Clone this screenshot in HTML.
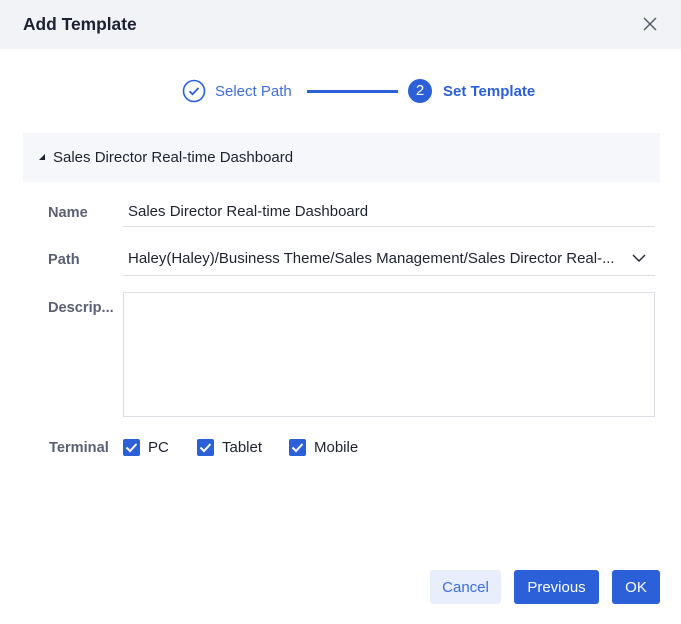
<!DOCTYPE html>
<html><head><style>
*{margin:0;padding:0;box-sizing:border-box}
body{width:681px;height:624px;background:#fff;font-family:"Liberation Sans",sans-serif;position:relative;overflow:hidden;color:#1f2330}
.a{position:absolute}
.hdr{left:0;top:0;width:681px;height:49px;background:#f2f3f6}
.lbl{font-size:14.6px;font-weight:bold;color:#5b6173}
.val{font-size:15px;color:#1f2330}
.ul{height:1px;background:#dcdee3;left:123px;width:532px}
.cb{width:17px;height:17px;background:#2b60d9;border-radius:2px}
.btn{height:34px;border-radius:3px;font-size:15px;text-align:center;line-height:35px}
</style></head><body>
<div class="a hdr"></div>
<div class="a" style="left:23px;top:14px;font-size:17.4px;font-weight:bold;color:#1c2233">Add Template</div>
<svg class="a" style="left:643px;top:17px" width="14" height="14" viewBox="0 0 14 14"><path d="M1 1L13 13M13 1L1 13" stroke="#50566a" stroke-width="1.4"/></svg>

<svg class="a" style="left:182px;top:79px" width="24" height="24" viewBox="0 0 24 24"><circle cx="12" cy="12" r="10.5" fill="none" stroke="#2b60d9" stroke-width="1.6"/><path d="M7.5 12.2l3 3 6-6.2" fill="none" stroke="#2b60d9" stroke-width="1.8"/></svg>
<div class="a" style="left:215px;top:83px;font-size:15px;color:#3d6de0">Select Path</div>
<div class="a" style="left:307px;top:90px;width:91px;height:3px;background:#2b60d9"></div>
<div class="a" style="left:408px;top:79px;width:24px;height:24px;border-radius:50%;background:#2b60d9;color:#fff;font-size:15px;text-align:center;line-height:24px">2</div>
<div class="a" style="left:443px;top:83px;font-size:15px;font-weight:bold;color:#2b60d9">Set Template</div>

<div class="a" style="left:23px;top:133px;width:637px;height:49px;background:#f6f7fa"></div>
<svg class="a" style="left:38px;top:153px" width="8" height="8"><path d="M1 7L7 7L7 1Z" fill="#1f2330"/></svg>
<div class="a val" style="left:53px;top:149px">Sales Director Real-time Dashboard</div>

<div class="a lbl" style="left:48px;top:205px">Name</div>
<div class="a val" style="left:128px;top:203px">Sales Director Real-time Dashboard</div>
<div class="a ul" style="top:226px"></div>

<div class="a lbl" style="left:48px;top:252px">Path</div>
<div class="a val" style="left:128px;top:250px">Haley(Haley)/Business Theme/Sales Management/Sales Director Real-...</div>
<svg class="a" style="left:632px;top:253px" width="14" height="10"><path d="M1 2L7 8L13 2" fill="none" stroke="#1f2330" stroke-width="1.4"/></svg>
<div class="a ul" style="top:275px"></div>

<div class="a lbl" style="left:48px;top:300px">Descrip...</div>
<div class="a" style="left:123px;top:292px;width:532px;height:125px;border:1px solid #dcdee3"></div>

<div class="a lbl" style="left:49px;top:440px">Terminal</div>
<div class="a cb" style="left:123px;top:439px"></div>
<div class="a cb" style="left:197px;top:439px"></div>
<div class="a cb" style="left:289px;top:439px"></div>
<svg class="a" style="left:123px;top:439px" width="190" height="17"><g fill="none" stroke="#fff" stroke-width="2"><path d="M3.5 8.5l3.5 3.5 6.5-7"/><path d="M77.5 8.5l3.5 3.5 6.5-7"/><path d="M169.5 8.5l3.5 3.5 6.5-7"/></g></svg>
<div class="a val" style="left:148px;top:439px">PC</div>
<div class="a val" style="left:222px;top:439px">Tablet</div>
<div class="a val" style="left:314px;top:439px">Mobile</div>

<div class="a btn" style="left:430px;top:570px;width:71px;background:#e8eefb;color:#3d6de0">Cancel</div>
<div class="a btn" style="left:514px;top:570px;width:85px;background:#2b60d9;color:#fff">Previous</div>
<div class="a btn" style="left:612px;top:570px;width:48px;background:#2b60d9;color:#fff">OK</div>
</body></html>
